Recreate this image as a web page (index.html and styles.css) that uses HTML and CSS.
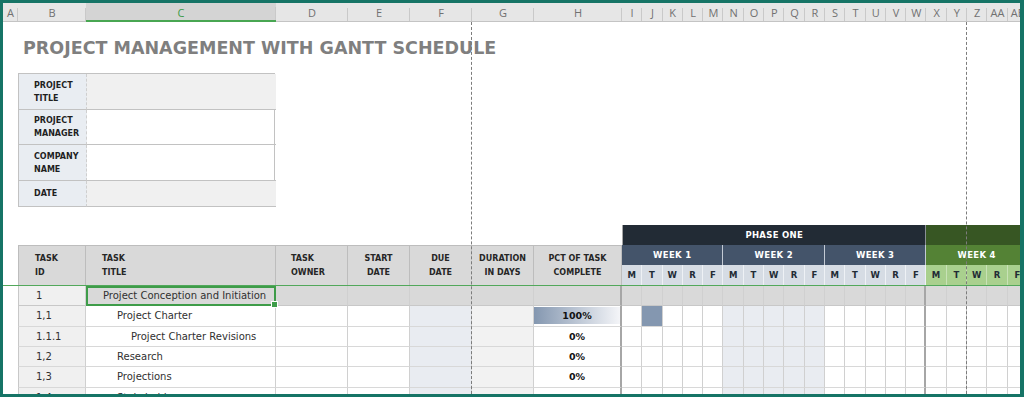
FILE: index.html
```html
<!DOCTYPE html>
<html lang="en">
<head>
    <meta charset="utf-8"/>
    <title>Project Management with Gantt Schedule</title>
    <link rel="stylesheet" href="styles.css">
</head>
<body>

<div class="frame">
    <div class="sheet">

        <!-- spreadsheet column letters -->
        <div class="col_heads">
            <span>A</span><span>B</span><span class="col_heads__selected">C</span><span>D</span><span>E</span><span>F</span><span>G</span><span>H</span>
            <span>I</span><span>J</span><span>K</span><span>L</span><span>M</span><span>N</span><span>O</span><span>P</span><span>Q</span><span>R</span>
            <span>S</span><span>T</span><span>U</span><span>V</span><span>W</span><span>X</span><span>Y</span><span>Z</span><span>AA</span><span>AB</span>
        </div>

        <h1 class="title">PROJECT MANAGEMENT WITH GANTT SCHEDULE</h1>

        <div class="info">
            <div class="info__label">PROJECT<br>TITLE</div>
            <div class="info__value info__value--shaded"></div>
            <div class="info__label">PROJECT<br>MANAGER</div>
            <div class="info__value"></div>
            <div class="info__label">COMPANY<br>NAME</div>
            <div class="info__value"></div>
            <div class="info__label">DATE</div>
            <div class="info__value info__value--shaded"></div>
        </div>

        <!-- header: phase / weeks / days -->
        <div class="plan_head">
            <div class="plan_head__blank"></div>
            <div class="phase">PHASE ONE</div>
            <div class="phase phase--two"></div>

            <div class="plan_head__col_a"></div>
            <div class="th th--left">TASK<br>ID</div>
            <div class="th th--left">TASK<br>TITLE</div>
            <div class="th th--left th--owner">TASK<br>OWNER</div>
            <div class="th">START<br>DATE</div>
            <div class="th th--dashed">DUE<br>DATE</div>
            <div class="th">DURATION<br>IN DAYS</div>
            <div class="th">PCT OF TASK<br>COMPLETE</div>
            <div class="week">WEEK 1</div>
            <div class="week">WEEK 2</div>
            <div class="week">WEEK 3</div>
            <div class="week week--green">WEEK 4</div>

            <div class="day">M</div><div class="day">T</div><div class="day">W</div><div class="day">R</div><div class="day">F</div>
            <div class="day">M</div><div class="day">T</div><div class="day">W</div><div class="day">R</div><div class="day">F</div>
            <div class="day">M</div><div class="day">T</div><div class="day">W</div><div class="day">R</div><div class="day">F</div>
            <div class="day day--green">M</div><div class="day day--green">T</div><div class="day day--green">W</div><div class="day day--green">R</div><div class="day day--green">F</div>
        </div>

        <!-- task rows -->
        <div class="row row--group">
            <div class="cell_a"></div>
            <div class="id">1</div>
            <div class="task task--selected">Project Conception and Initiation</div>
            <div></div><div></div><div class="due"></div><div class="dur"></div><div class="pct"></div>
            <span></span><span></span><span></span><span></span><span></span><span></span><span></span><span></span><span></span><span></span>
            <span></span><span></span><span></span><span></span><span></span><span></span><span></span><span></span><span></span><span></span>
        </div>
        <div class="row">
            <div class="cell_a"></div>
            <div class="id">1,1</div>
            <div class="task task--l2">Project Charter</div>
            <div></div><div></div><div class="due"></div><div class="dur"></div>
            <div class="pct"><div class="pct__bar" style="width: 100%;"></div><b>100%</b></div>
            <span></span><span class="filled"></span><span></span><span></span><span></span><span></span><span></span><span></span><span></span><span></span>
            <span></span><span></span><span></span><span></span><span></span><span></span><span></span><span></span><span></span><span></span>
        </div>
        <div class="row">
            <div class="cell_a"></div>
            <div class="id">1.1.1</div>
            <div class="task task--l3">Project Charter Revisions</div>
            <div></div><div></div><div class="due"></div><div class="dur"></div>
            <div class="pct"><b>0%</b></div>
            <span></span><span></span><span></span><span></span><span></span><span></span><span></span><span></span><span></span><span></span>
            <span></span><span></span><span></span><span></span><span></span><span></span><span></span><span></span><span></span><span></span>
        </div>
        <div class="row">
            <div class="cell_a"></div>
            <div class="id">1,2</div>
            <div class="task task--l2">Research</div>
            <div></div><div></div><div class="due"></div><div class="dur"></div>
            <div class="pct"><b>0%</b></div>
            <span></span><span></span><span></span><span></span><span></span><span></span><span></span><span></span><span></span><span></span>
            <span></span><span></span><span></span><span></span><span></span><span></span><span></span><span></span><span></span><span></span>
        </div>
        <div class="row">
            <div class="cell_a"></div>
            <div class="id">1,3</div>
            <div class="task task--l2">Projections</div>
            <div></div><div></div><div class="due"></div><div class="dur"></div>
            <div class="pct"><b>0%</b></div>
            <span></span><span></span><span></span><span></span><span></span><span></span><span></span><span></span><span></span><span></span>
            <span></span><span></span><span></span><span></span><span></span><span></span><span></span><span></span><span></span><span></span>
        </div>
        <div class="row">
            <div class="cell_a"></div>
            <div class="id">1,4</div>
            <div class="task task--l2">Stakeholders</div>
            <div></div><div></div><div class="due"></div><div class="dur"></div>
            <div class="pct"><b>0%</b></div>
            <span></span><span></span><span></span><span></span><span></span><span></span><span></span><span></span><span></span><span></span>
            <span></span><span></span><span></span><span></span><span></span><span></span><span></span><span></span><span></span><span></span>
        </div>

        <!-- page break guides drawn by the spreadsheet -->
        <div class="page_break page_break--first"></div>
        <div class="page_break page_break--second"></div>
    </div>
</div>

</body>
</html>
```

FILE: styles.css
```css
:root {
    --cols: 15px 68px 190px 72px 62px 62px 62px 88px repeat(20, 20.3px);
    --grid-line: #d0d0d0;
    --strong-line: #a6a6a6;
}

html, body {
    margin: 0;
}

body {
    background: #ffffff;
    font-family: "DejaVu Sans", sans-serif;
    color: #262626;
}

.frame {
    width: 1024px;
    height: 397px;
    box-sizing: border-box;
    border: 3px solid #167466;
    border-right-width: 4px;
    overflow: hidden;
}

.sheet {
    position: relative;
    height: 100%;
    overflow: hidden;
}

/* column letters */
.col_heads {
    display: grid;
    grid-template-columns: var(--cols);
    height: 19px;
    box-sizing: border-box;
    background: #e6e6e6;
    border-bottom: 1px solid #c4c4c4;
}

.col_heads span {
    font-family: "Open Sans", sans-serif;
    font-size: 11px;
    line-height: 14px;
    padding-top: 3px;
    text-align: center;
    color: #717171;
    background: linear-gradient(#c9c9c9, #c9c9c9) right bottom / 1px 13px no-repeat;
    overflow: hidden;
    white-space: nowrap;
}

.col_heads .col_heads__selected {
    background-color: #d4d4d4;
    color: #3b9a48;
    border-bottom: 2px solid #48a652;
    margin-bottom: -1px;
}

/* title */
.title {
    margin: 0;
    height: 51px;
    box-sizing: border-box;
    padding: 14px 0 0 20px;
    font-size: 17.5px;
    line-height: 24px;
    font-weight: bold;
    color: #7f7f7f;
    white-space: nowrap;
}

/* project info block */
.info {
    display: grid;
    grid-template-columns: 68px 189px;
    grid-template-rows: 36px 35px 36px 26px;
    width: 257px;
    margin-left: 15px;
    border: 1px solid #c2c2c2;
    border-bottom: 0;
    box-sizing: border-box;
}

.info__label,
.info__value {
    box-sizing: border-box;
    border-bottom: 1px solid #c2c2c2;
}

.info__label {
    display: flex;
    align-items: center;
    padding-left: 15px;
    background: #e9edf2;
    border-right: 1px dashed #cfcfcf;
    font-size: 8px;
    font-weight: bold;
    line-height: 13px;
    color: #1f1f1f;
}

.info__value--shaded {
    background: #f0f0f0;
}

/* plan header */
.plan_head {
    display: grid;
    grid-template-columns: var(--cols);
    grid-template-rows: 20px 20px 20px;
    margin-top: 18px;
    border-bottom: 1px solid #52a85b;
}

.plan_head__blank {
    grid-column: span 8;
}

.plan_head__col_a {
    grid-row: span 2;
}

.phase {
    grid-column: span 15;
    background: #222b35;
    color: #ffffff;
    font-size: 8.5px;
    font-weight: bold;
    letter-spacing: 0.3px;
    line-height: 20px;
    text-align: center;
    border-left: 1px solid #a6a6a6;
    border-right: 1px solid #8a8f96;
}

.phase--two {
    grid-column: span 5;
    background: #375623;
    border-left: 0;
}

.th {
    grid-row: span 2;
    display: flex;
    align-items: center;
    justify-content: center;
    text-align: center;
    background: #d9d9d9;
    border-top: 1px solid #bdbdbd;
    border-right: 1px solid #bdbdbd;
    font-size: 8px;
    font-weight: bold;
    line-height: 14px;
    color: #262626;
    white-space: nowrap;
}

.th--left {
    justify-content: flex-start;
    text-align: left;
    padding-left: 16px;
}

.th--owner {
    padding-left: 15px;
}

.plan_head .th:nth-child(5) {
    border-left: 1px solid #bdbdbd;
}

.th--dashed {
    border-right-style: dashed;
}

.week {
    grid-column: span 5;
    background: #44546a;
    color: #ffffff;
    font-size: 8.5px;
    font-weight: bold;
    letter-spacing: 0.3px;
    line-height: 20px;
    text-align: center;
    border-right: 1px solid #c3cad4;
}

.week--green {
    background: #548235;
}

.day {
    background: #d6dce4;
    border-right: 1px solid #eef1f5;
    font-size: 8.5px;
    font-weight: bold;
    line-height: 20px;
    text-align: center;
    color: #222b35;
}

.day--green {
    background: #a9d08e;
    border-right-color: #c8e2b6;
}

/* task rows */
.row {
    display: grid;
    grid-template-columns: var(--cols);
    height: 20.33px;
}

.row > * {
    box-sizing: border-box;
    border-right: 1px solid var(--grid-line);
    border-bottom: 1px solid #d8d8d8;
    font-size: 10px;
    line-height: 19px;
    white-space: nowrap;
}

.row > .cell_a {
    border: 0;
}

.row > :nth-child(8) {
    border-right: 2px solid var(--strong-line);
}

.row > :nth-child(23) {
    border-right: 2px solid var(--strong-line);
}

.row > :nth-child(n+14):nth-child(-n+18) {
    background: #e9ecf1;
}

.row > :nth-child(6) {
    border-right-style: dashed;
}

.id {
    padding-left: 17px;
    background: #f0f0f0;
    border-left: 1px solid #c8c8c8;
    color: #303030;
}

.task {
    padding-left: 17px;
    color: #303030;
}

.task--l2 {
    padding-left: 31px;
}

.task--l3 {
    padding-left: 45px;
}

.due {
    background: #e9ecf1;
}

.dur {
    background: #f2f2f2;
}

.pct {
    position: relative;
    text-align: center;
}

.pct b {
    position: relative;
    font-size: 9.5px;
    color: #111111;
}

.pct__bar {
    position: absolute;
    top: 1px;
    bottom: 2px;
    left: 0;
    background: linear-gradient(to right, #8497b0, #f4f5f8);
}

.filled {
    background: #8497b0 !important;
}

.row--group > * {
    background: #d9d9d9 !important;
    border-bottom-color: #c8c8c8;
}

.row--group > .id {
    background: #f0f0f0 !important;
}

.row--group > .cell_a {
    background: transparent !important;
}

.task--selected {
    position: relative;
    outline: 2px solid #3e9c49;
    outline-offset: -2px;
}

.task--selected::after {
    content: "";
    position: absolute;
    right: -3px;
    bottom: -3px;
    width: 5px;
    height: 5px;
    background: #3e9c49;
    border: 1px solid #ffffff;
}

.page_break {
    position: absolute;
    top: 19px;
    bottom: 0;
    border-left: 1px dashed #7c7c7c;
}

.page_break--first {
    left: 468px;
}

.page_break--second {
    left: 963px;
}
```
